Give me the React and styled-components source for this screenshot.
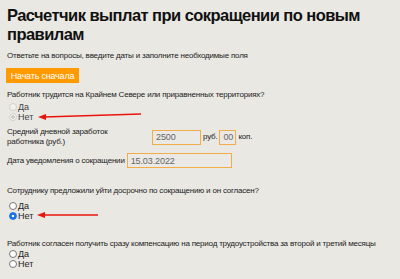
import React from "react";
import styled, { createGlobalStyle } from "styled-components";

const Global = createGlobalStyle`
  html, body { margin: 0; padding: 0; background: #eae8e3; }
  body { font-family: "Liberation Sans", Arial, sans-serif; color: #222; }
`;

const Page = styled.div`
  padding: 6px 7px 8px 7px;
  width: 400px;
  box-sizing: border-box;
`;

const Title = styled.h1`
  margin: 0;
  font-size: 16.5px;
  letter-spacing: -0.55px;
  line-height: 19px;
  font-weight: bold;
  color: #111;
  white-space: nowrap;
`;

const Text = styled.div`
  font-size: 8px;
  letter-spacing: -0.2px;
  line-height: 10px;
  white-space: nowrap;
  margin-top: ${(p) => p.$mt || 0}px;
`;

const Button = styled.button`
  display: block;
  margin: 7px 0 0 -1px;
  background: #ff9a00;
  color: #fff;
  border: none;
  font-family: inherit;
  font-size: 9px;
  letter-spacing: -0.2px;
  height: 15px;
  width: 73px;
  padding: 0;
`;

const RadioGroup = styled.div`
  display: flex;
  flex-direction: column;
  margin-top: ${(p) => (p.$mt != null ? p.$mt : 2)}px;
  margin-left: 2px;
`;

const RadioRow = styled.label`
  position: relative;
  display: flex;
  align-items: center;
  height: 10px;
  font-size: 9px;
  color: ${(p) => (p.$disabled ? "#444" : "#222")};
`;

const Circle = styled.span`
  width: 6px;
  height: 6px;
  border-radius: 50%;
  border: 1px solid ${(p) => (p.$disabled ? "#d2d0cc" : "#777")};
  background: ${(p) =>
    p.$checked
      ? p.$disabled
        ? "radial-gradient(circle, #cfcdc9 0 1.6px, #f4f3f1 2px)"
        : "radial-gradient(circle, #fff 0 1.2px, #1a73e8 1.6px)"
      : p.$disabled
      ? "#f2f1ee"
      : "#fff"};
  ${(p) => (p.$checked && !p.$disabled ? "border-color: #1a73e8;" : "")}
  margin-right: 1px;
  flex: none;
`;

const Arrow = styled.svg`
  position: absolute;
  left: ${(p) => p.$left}px;
  top: ${(p) => p.$top}px;
  overflow: visible;
`;

const FieldRow = styled.div`
  display: flex;
  align-items: center;
  margin-top: ${(p) => p.$mt || 0}px;
  font-size: 8px;
  letter-spacing: -0.2px;
  line-height: 10px;
`;

const Label = styled.div`
  width: ${(p) => (p.$w ? `${p.$w}px` : "auto")};
  margin-right: ${(p) => p.$gap || 0}px;
  white-space: nowrap;
  flex: none;
`;

const Input = styled.div`
  box-sizing: border-box;
  width: ${(p) => p.$w}px;
  height: 15px;
  border: 1px solid #f3ac4a;
  background: #ebe9e5;
  color: #666;
  font-size: 9px;
  letter-spacing: -0.1px;
  display: flex;
  align-items: center;
  padding-left: 3px;
  flex: none;
`;

const Unit = styled.span`
  margin: 0 2px;
  font-size: 8px;
`;

const Radio = ({ label, checked, disabled, arrow }) => (
  <RadioRow $disabled={disabled}>
    <Circle $checked={checked} $disabled={disabled} />
    {label}
    {arrow && (
      <Arrow $left={arrow.left} $top={arrow.top} width="110" height="10">
        <line
          x1={arrow.x1}
          y1={arrow.y1}
          x2={6}
          y2={arrow.y2}
          stroke="#e8150e"
          strokeWidth="1.5"
        />
        <polygon
          points={`0,${arrow.y2} 8,${arrow.y2 - 3} 8,${arrow.y2 + 3}`}
          fill="#e8150e"
        />
      </Arrow>
    )}
  </RadioRow>
);

export default function App() {
  return (
    <>
      <Global />
      <Page>
        <Title>
          Расчетчик выплат при сокращении по новым
          <br />
          правилам
        </Title>
        <Text $mt={7}>Ответьте на вопросы, введите даты и заполните необходимые поля</Text>
        <Button>Начать сначала</Button>
        <Text $mt={7}>Работник трудится на Крайнем Севере или приравненных территориях?</Text>
        <RadioGroup>
          <Radio label="Да" disabled />
          <Radio
            label="Нет"
            checked
            disabled
            arrow={{ left: 29, top: 0, x1: 103, y1: 2, y2: 5 }}
          />
        </RadioGroup>
        <FieldRow $mt={5}>
          <Label $w={145}>
            Средний дневной заработок
            <br />
            работника (руб.)
          </Label>
          <Input $w={49}>2500</Input>
          <Unit>руб.</Unit>
          <Input $w={17}>00</Input>
          <Unit>коп.</Unit>
        </FieldRow>
        <FieldRow $mt={6}>
          <Label $gap={2}>Дата уведомления о сокращении</Label>
          <Input $w={105}>15.03.2022</Input>
        </FieldRow>
        <Text $mt={18}>Сотруднику предложили уйти досрочно по сокращению и он согласен?</Text>
        <RadioGroup $mt={5}>
          <Radio label="Да" />
          <Radio label="Нет" checked arrow={{ left: 28, top: 0, x1: 61, y1: 4, y2: 4 }} />
        </RadioGroup>
        <Text $mt={18}>
          Работник согласен получить сразу компенсацию на период трудоустройства за второй и третий месяцы
        </Text>
        <RadioGroup $mt={0}>
          <Radio label="Да" />
          <Radio label="Нет" />
        </RadioGroup>
      </Page>
    </>
  );
}
